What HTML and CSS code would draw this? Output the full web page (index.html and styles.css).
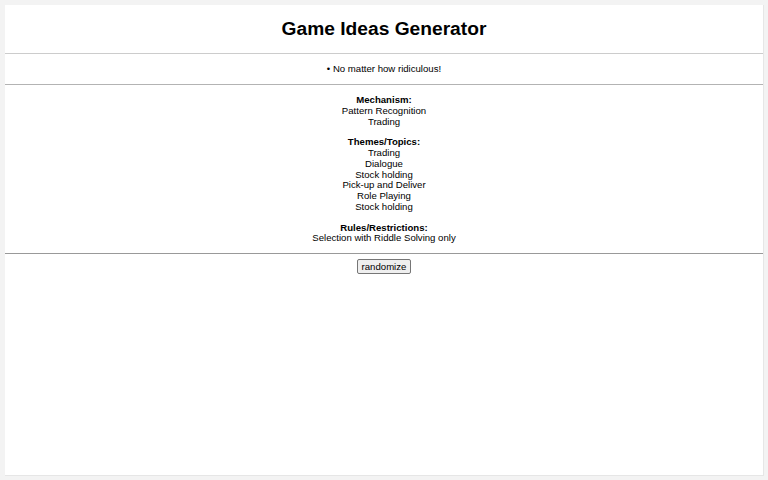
FILE: index.html
```html
<!DOCTYPE html>
<html>
<head>
<meta charset="utf-8">
<link rel="stylesheet" href="styles.css">
</head>
<body>
<div class="app">
  <header class="header"><h1 class="title">Game Ideas Generator</h1></header>
  <div class="subtitle">• No matter how ridiculous!</div>
  <main class="content">
    <section class="group">
      <div class="label">Mechanism:</div>
      <div>Pattern Recognition</div>
      <div>Trading</div>
    </section>
    <section class="group">
      <div class="label">Themes/Topics:</div>
      <div>Trading</div>
      <div>Dialogue</div>
      <div>Stock holding</div>
      <div>Pick-up and Deliver</div>
      <div>Role Playing</div>
      <div>Stock holding</div>
    </section>
    <section class="group">
      <div class="label">Rules/Restrictions:</div>
      <div>Selection with Riddle Solving only</div>
    </section>
  </main>
  <div class="actions"><button class="btn">randomize</button></div>
</div>
</body>
</html>
```
FILE: styles.css
```css
html, body {
  margin: 0;
  padding: 0;
}
body {
  background: #f3f3f3;
  padding: 5px 4px 4px 5px;
  font-family: "Liberation Sans", Arial, sans-serif;
  color: #000;
  box-sizing: border-box;
  height: 480px;
}
.app {
  background: #fff;
  border: 1px solid #e6e6e6;
  border-left: none;
  border-top: none;
  height: 471px;
  box-sizing: border-box;
  text-align: center;
}
.header {
  border-bottom: 1px solid #cccccc;
  height: 49px;
  box-sizing: border-box;
  display: flex;
  align-items: center;
  justify-content: center;
}
.title {
  margin: 0;
  font-size: 19.2px;
  font-weight: bold;
  line-height: 22px;
}
.subtitle {
  font-size: 9.6px;
  line-height: 11px;
  height: 31px;
  box-sizing: border-box;
  padding-top: 9px;
  border-bottom: 1px solid #b3b3b3;
}
.content {
  font-size: 9.6px;
  line-height: 10.75px;
  padding: 10px 0 9px;
  display: flex;
  flex-direction: column;
  gap: 10px;
  border-bottom: 1px solid #999;
}
.label {
  font-weight: bold;
}
.actions {
  display: flex;
  justify-content: center;
  padding-top: 5px;
}
.btn {
  font-family: "Liberation Sans", Arial, sans-serif;
  font-size: 9.6px;
  line-height: 11px;
  padding: 1px 4px;
  margin: 0;
  background: #efefef;
  border: 1px solid #767676;
  border-radius: 2px;
  color: #000;
}
```
